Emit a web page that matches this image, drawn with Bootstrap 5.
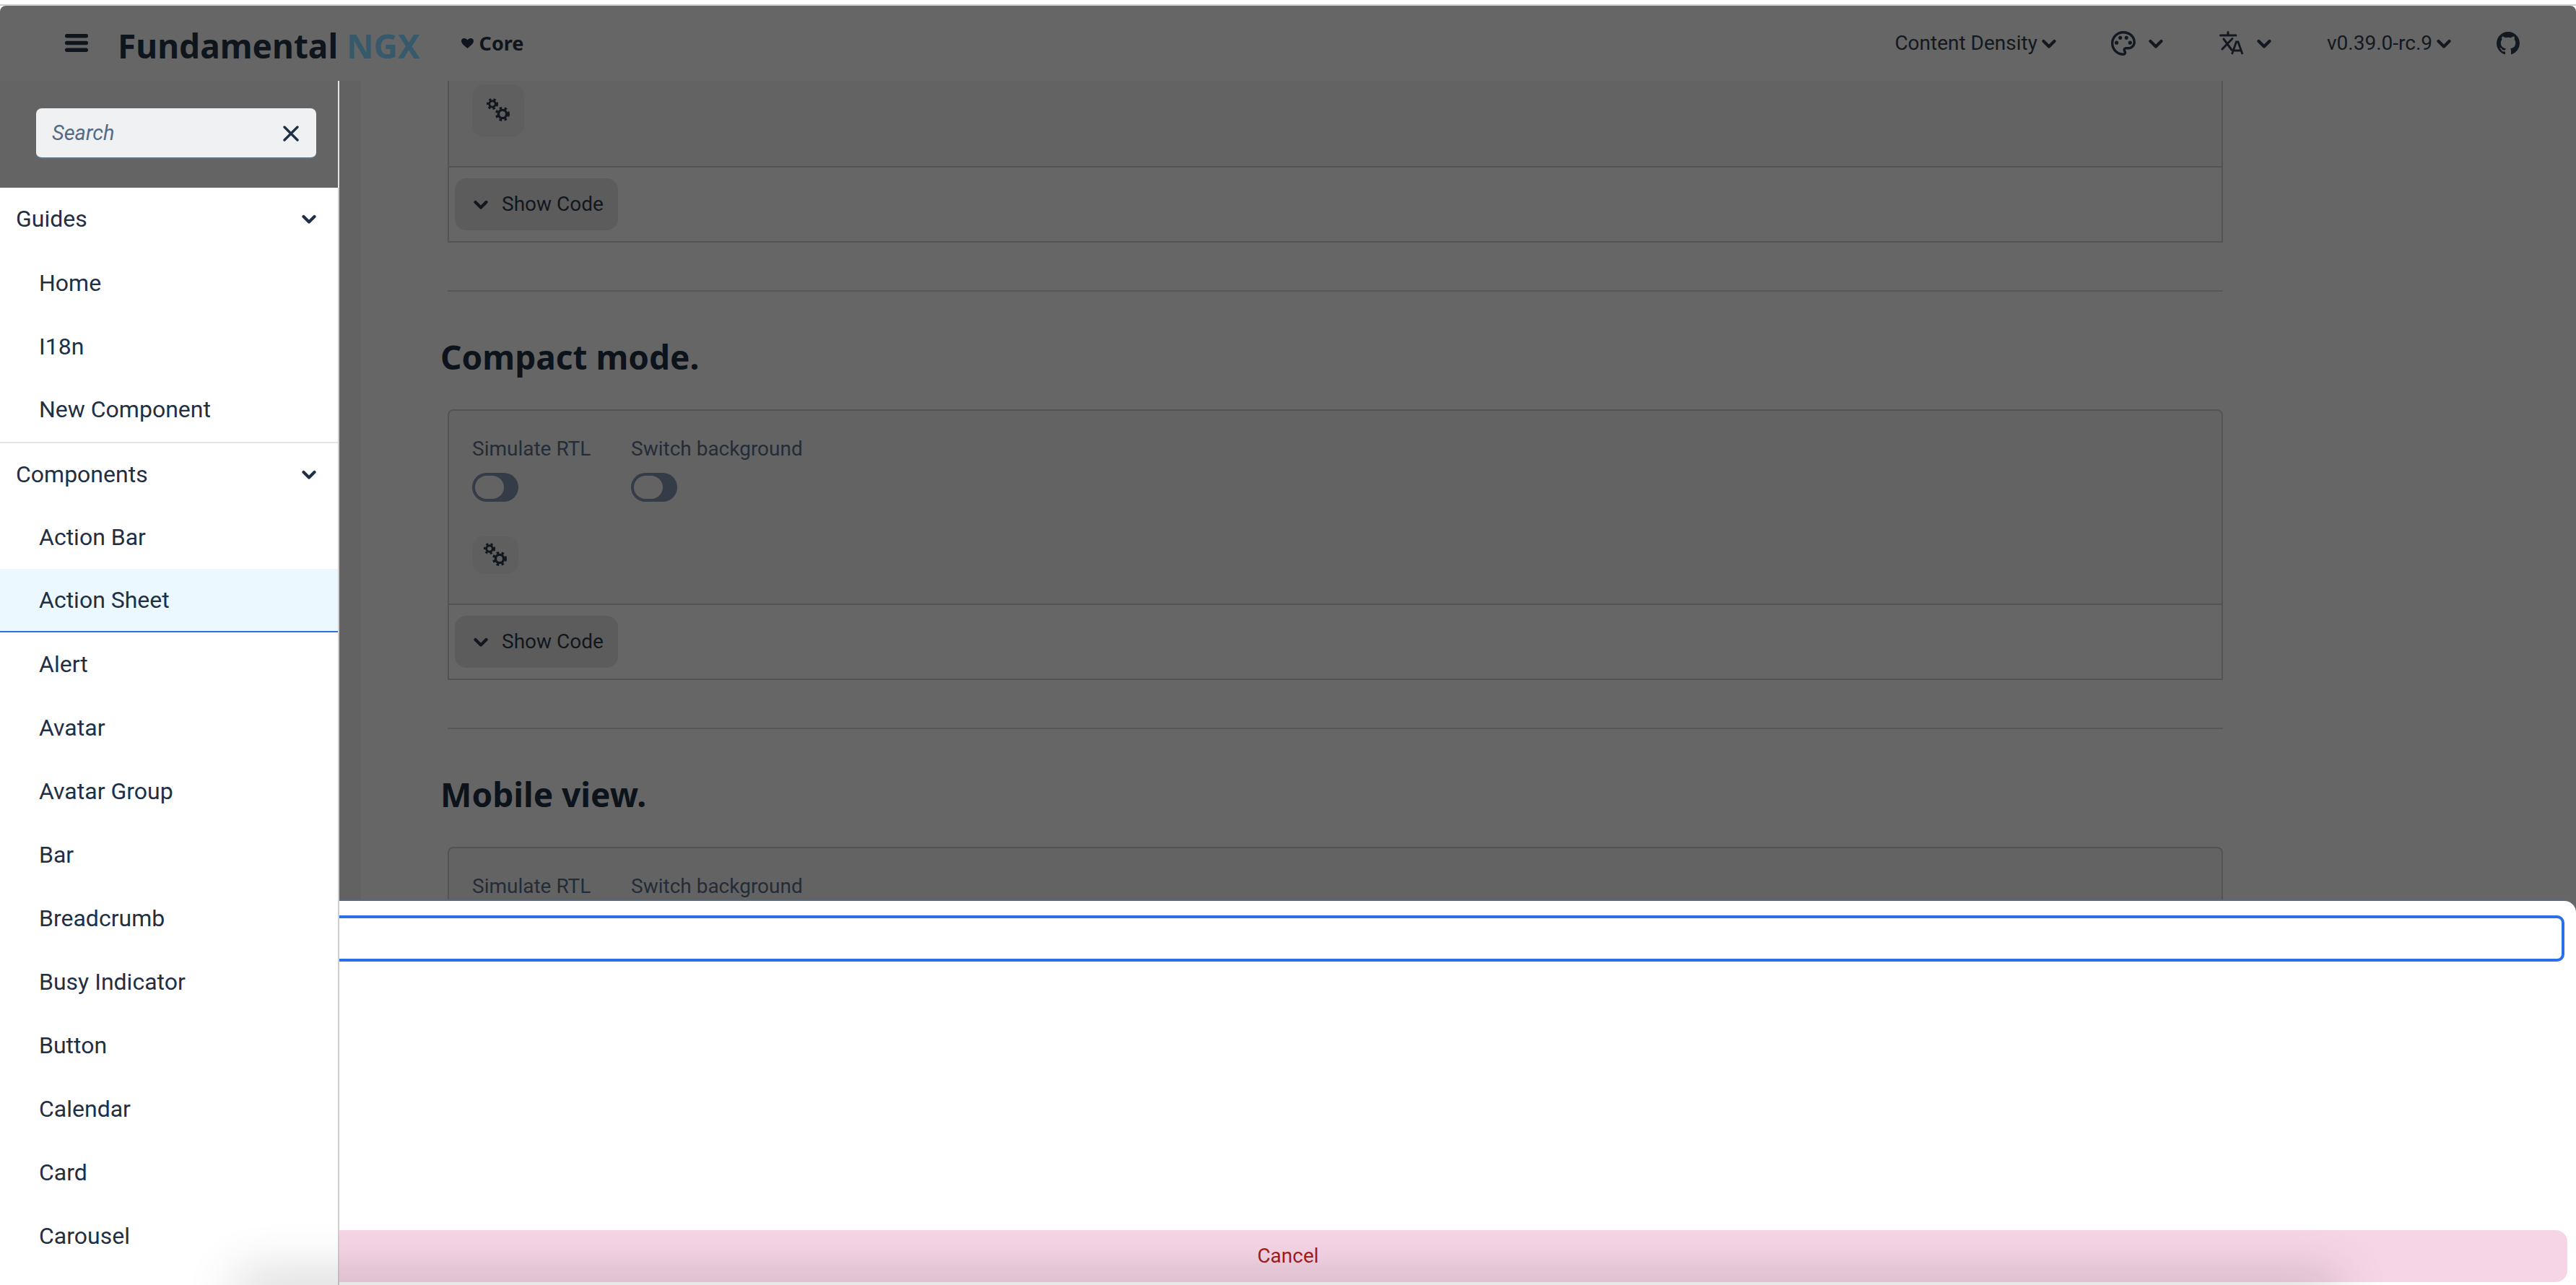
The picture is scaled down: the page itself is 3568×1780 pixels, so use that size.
<!DOCTYPE html>
<html lang="en">
<head>
<meta charset="utf-8">
<title>Fundamental NGX</title>
<link rel="stylesheet" href="https://cdn.jsdelivr.net/npm/bootstrap@5.3.0/dist/css/bootstrap.min.css">
<style>
html,body{height:100%}
body{font-family:Roboto,"Liberation Sans",sans-serif;font-size:32px;background:#fff;color:#1f3044;overflow:hidden}
.top-strip{height:8px;flex:none;background:#fff;border-bottom:2px solid #cfcfcf}
.site-head{height:104px;flex:none;background:#666;border-radius:8px 8px 0 0;color:#0e151d;padding:0 78px 0 90px;align-items:center;display:flex}
.burger{width:32px;height:25px;flex:none;position:relative;top:-1px}
.brand-txt{font-family:"Noto Sans",Roboto,sans-serif;font-size:46px;font-weight:700;margin-left:41px;line-height:1;white-space:nowrap;color:#0e151d;position:relative;top:3px}
.brand-txt span{color:#36596b}
.core-link{font-family:"Noto Sans",Roboto,sans-serif;margin-left:57px;font-size:27px;font-weight:700;display:flex;align-items:center;gap:8px;position:relative}
.hd-item{display:flex;align-items:center;font-size:28px;white-space:nowrap;color:#121920}
.chev{width:20px;height:13px;flex:none;fill:none;stroke:currentColor;stroke-width:4.2;stroke-linecap:round;stroke-linejoin:round}
.ic32{width:34px;height:34px;flex:none}
.gap-s{gap:18px}.gap-t{gap:6px}
.ml-a{margin-left:76px}.ml-b{margin-left:78px}.ml-c{margin-left:77px}.ml-d{margin-left:63px}
.side{width:470px;flex:none;position:relative;z-index:3;display:flex;flex-direction:column}
.side-search{height:148px;flex:none;background:#646464;border-right:2px solid #e4e4e4;padding:38px 30px 0 50px}
.search-box{height:70px;background:#eff1f2;border-bottom:2px solid #5b738b;border-radius:8px;padding:2px 24px 0 22px;display:flex;align-items:center;justify-content:space-between;font-size:29px;font-style:italic;color:#556b82}
.side-nav{flex:1;background:#fff;border-right:2px solid #cfcfcf;overflow:hidden}
.sec-row{height:86px;display:flex;align-items:center;justify-content:space-between;padding:0 30px 0 22px;color:#1f3044}
.sec-row.first{margin-bottom:2px}
.nav-row{height:88px;display:flex;align-items:center;padding-left:54px;color:#1f3044;white-space:nowrap}
.nav-row.sel{background:#ebf8ff;border-bottom:2px solid #2b70e8}
.sec-end{height:90px;padding-bottom:2px;border-bottom:2px solid #e3e3e3}
.page-main{flex:1;min-width:0;background:#666;border-left:30px solid #626262;padding-left:120px;overflow:hidden}
.page-inner{margin-top:-151px;width:2459px}
.demo-card{--bs-card-bg:#636363;--bs-card-border-color:#535353;--bs-card-border-width:2px;--bs-card-border-radius:8px;--bs-card-inner-border-radius:6px;height:375px;border-bottom-left-radius:0;border-bottom-right-radius:0}
.demo-body{padding:32px 32px 0;height:267px;flex:none}
.demo-body.scrolled{padding-top:154px}
.opt-col{width:220px;color:#232c37;font-size:28px;line-height:42px;white-space:nowrap}
.tog{display:flex;align-items:center;width:64px;height:40px;margin-top:12px;background:#343c48;border-radius:20px;padding-left:4px}
.tog i{display:block;width:40px;height:32px;background:#636363;border-radius:16px}
.gear-btn{display:flex;align-items:center;justify-content:center;background:#5f5f5f;border-radius:16px}
.gear-a{width:72px;height:72px}
.gear-b{width:64px;height:52px;margin-top:48px}
.gears{width:32px;height:36px}
.demo-foot{height:104px;flex:none;padding:15px 8px;border-top:2px solid #535353;background:#666}
.code-btn{display:inline-flex;align-items:center;gap:19px;height:72px;width:226px;padding-left:26px;background:#5c5c5c;border-radius:16px;font-size:28px;color:#10171f}
.sep{margin:66px 0 61px;border:0;border-top:2px solid #575757;opacity:1}
.sec-title{font-family:"Noto Sans",Roboto,sans-serif;font-size:46px;font-weight:700;line-height:58px;margin:0 0 44px -10px;color:#0c131b}
.sheet{position:absolute;left:0;right:0;bottom:0;height:532px;z-index:2;background:#fff;border-radius:0 16px 0 0;box-shadow:0 -2px 0 #5d6a78;padding:20px 12px 4px;display:flex;flex-direction:column}
.focus-box{height:64px;margin-right:4px;border:4px solid #2b70e8;border-radius:10px;flex:none}
.cancel-btn{margin-top:auto;height:72px;background:#f6d5e7;border-radius:16px;display:flex;align-items:center;justify-content:center;font-size:28px;color:#a5201a;flex:none}
.bottom-glow{position:absolute;left:340px;right:340px;bottom:-20px;height:20px;z-index:4;box-shadow:0 0 70px 14px rgba(0,0,0,.19)}
</style>
</head>
<body class="d-flex flex-column position-relative">
<div class="top-strip"></div>
<header class="site-head">
  <svg class="burger" viewBox="0 0 32 25"><g fill="#0e151d"><rect x="0" y="0" width="32" height="5.4" rx="2.7"/><rect x="0" y="9.8" width="32" height="5.4" rx="2.7"/><rect x="0" y="19.6" width="32" height="5.4" rx="2.7"/></g></svg>
  <div class="brand-txt">Fundamental <span>NGX</span></div>
  <div class="core-link"><svg width="17" height="14" viewBox="0 0 17 14"><path fill="#0e151d" d="M8.5 14C6 11.5 0 8 0 3.8 0 1.5 1.8 0 3.8 0 5.8 0 7.5 1 8.5 2.5 9.5 1 11.200 0 13.200 0 15.200 0 17 1.500 17 3.800 17 8 11 11.500 8.500 14z"/></svg>Core</div>
  <div class="hd-item gap-t ms-auto">Content Density<svg class="chev" viewBox="0 0 20 13"><path d="M2.500 3 10 10.500 17.500 3"/></svg></div>
  <div class="hd-item gap-s ml-a">
    <svg class="ic32" viewBox="2 2 20 20"><path fill="#121920" d="M12 22C6.490 22 2 17.510 2 12S6.490 2 12 2s10 4.040 10 9c0 3.310-2.690 6-6 6h-1.770c-.28 0-.5.22-.5.5 0 .12.05.23.13.33.41.47.64 1.060.64 1.670A2.500 2.500 0 0 1 12 22zm0-18c-4.410 0-8 3.590-8 8s3.590 8 8 8c.28 0 .5-.22.5-.5a.54.54 0 0 0-.14-.35c-.41-.46-.63-1.050-.63-1.650a2.500 2.500 0 0 1 2.500-2.500H16c2.210 0 4-1.790 4-4 0-3.860-3.590-7-8-7z"/><circle cx="6.500" cy="11.500" r="1.500" fill="#121920"/><circle cx="9.500" cy="7.500" r="1.500" fill="#121920"/><circle cx="14.500" cy="7.500" r="1.500" fill="#121920"/><circle cx="17.500" cy="11.500" r="1.500" fill="#121920"/></svg>
    <svg class="chev" viewBox="0 0 20 13"><path d="M2.500 3 10 10.500 17.500 3"/></svg>
  </div>
  <div class="hd-item gap-s ml-b">
    <svg class="ic32" viewBox="0 0 34 34" fill="none" stroke="#121920" stroke-width="3" stroke-linecap="round"><path d="M1.500 6H23M12 1.500V6M6 11 17 26M18 10.500 4 25"/><path stroke-width="2.800" stroke-linecap="butt" d="M17.500 32 23.500 15h2.500l6 17M20 27h9.500"/></svg>
    <svg class="chev" viewBox="0 0 20 13"><path d="M2.500 3 10 10.500 17.500 3"/></svg>
  </div>
  <div class="hd-item gap-t ml-c">v0.39.0-rc.9<svg class="chev" viewBox="0 0 20 13"><path d="M2.500 3 10 10.500 17.500 3"/></svg></div>
  <div class="hd-item ml-d"><svg width="32" height="32" viewBox="0 0 16 16"><path fill="#121920" d="M8 0C3.580 0 0 3.580 0 8c0 3.540 2.290 6.530 5.470 7.590.4.07.55-.17.55-.38 0-.19-.01-.82-.01-1.490-2.010.37-2.530-.49-2.690-.94-.09-.23-.48-.94-.82-1.130-.28-.15-.68-.52-.01-.53.63-.01 1.080.58 1.230.82.72 1.210 1.870.87 2.330.66.07-.52.28-.87.51-1.070-1.780-.2-3.640-.89-3.640-3.950 0-.87.31-1.590.82-2.150-.08-.2-.36-1.020.08-2.120 0 0 .67-.21 2.200.82.64-.18 1.320-.27 2-.27.68 0 1.360.09 2 .27 1.530-1.040 2.200-.82 2.200-.82.44 1.100.16 1.920.08 2.120.51.56.82 1.270.82 2.150 0 3.070-1.870 3.750-3.650 3.950.29.25.54.73.54 1.480 0 1.070-.01 1.930-.01 2.200 0 .21.15.46.55.38A8.012 8.012 0 0 0 16 8c0-4.420-3.580-8-8-8z"/></svg></div>
</header>
<div class="d-flex flex-grow-1" style="min-height:0">
  <aside class="side">
    <div class="side-search"><div class="search-box"><span>Search</span><svg width="22" height="22" viewBox="0 0 22 22"><path d="M2 2 20 20M20 2 2 20" stroke="#1f3044" stroke-width="3.400" stroke-linecap="round"/></svg></div></div>
    <nav class="side-nav">
      <div class="sec-row first">Guides<svg class="chev" viewBox="0 0 20 13"><path d="M2.500 3 10 10.500 17.500 3"/></svg></div>
      <div class="nav-row">Home</div>
      <div class="nav-row">I18n</div>
      <div class="nav-row sec-end">New Component</div>
      <div class="sec-row">Components<svg class="chev" viewBox="0 0 20 13"><path d="M2.500 3 10 10.500 17.500 3"/></svg></div>
      <div class="nav-row">Action Bar</div>
      <div class="nav-row sel">Action Sheet</div>
      <div class="nav-row">Alert</div>
      <div class="nav-row">Avatar</div>
      <div class="nav-row">Avatar Group</div>
      <div class="nav-row">Bar</div>
      <div class="nav-row">Breadcrumb</div>
      <div class="nav-row">Busy Indicator</div>
      <div class="nav-row">Button</div>
      <div class="nav-row">Calendar</div>
      <div class="nav-row">Card</div>
      <div class="nav-row">Carousel</div>
    </nav>
  </aside>
  <main class="page-main">
    <div class="page-inner">
      <div class="card demo-card">
        <div class="demo-body scrolled">
          <div class="gear-btn gear-a"><svg class="gears" viewBox="0 0 32 36" fill="none" stroke="#10171f"><circle cx="8" cy="9" r="4.300" stroke-width="3"/><circle cx="8" cy="9" r="6.600" stroke-width="3" stroke-dasharray="3.200 3.300"/><circle cx="22" cy="23" r="5.600" stroke-width="3.400"/><circle cx="22" cy="23" r="8.400" stroke-width="3.200" stroke-dasharray="3.500 3.500"/></svg></div>
        </div>
        <div class="demo-foot"><div class="code-btn"><svg class="chev" viewBox="0 0 20 13"><path d="M2.500 3 10 10.500 17.500 3"/></svg>Show Code</div></div>
      </div>
      <hr class="sep">
      <h2 class="sec-title">Compact mode.</h2>
      <div class="card demo-card">
        <div class="demo-body">
          <div class="d-flex"><div class="opt-col">Simulate RTL<div class="tog"><i></i></div></div><div class="opt-col">Switch background<div class="tog"><i></i></div></div></div>
          <div class="gear-btn gear-b"><svg class="gears" viewBox="0 0 32 36" fill="none" stroke="#10171f"><circle cx="8" cy="9" r="4.300" stroke-width="3"/><circle cx="8" cy="9" r="6.600" stroke-width="3" stroke-dasharray="3.200 3.300"/><circle cx="22" cy="23" r="5.600" stroke-width="3.400"/><circle cx="22" cy="23" r="8.400" stroke-width="3.200" stroke-dasharray="3.500 3.500"/></svg></div>
        </div>
        <div class="demo-foot"><div class="code-btn"><svg class="chev" viewBox="0 0 20 13"><path d="M2.500 3 10 10.500 17.500 3"/></svg>Show Code</div></div>
      </div>
      <hr class="sep">
      <h2 class="sec-title">Mobile view.</h2>
      <div class="card demo-card">
        <div class="demo-body">
          <div class="d-flex"><div class="opt-col">Simulate RTL</div><div class="opt-col">Switch background</div></div>
        </div>
      </div>
    </div>
  </main>
</div>
<div class="sheet">
  <div class="focus-box"></div>
  <div class="cancel-btn">Cancel</div>
</div>
<div class="bottom-glow"></div>
<script src="https://cdn.jsdelivr.net/npm/bootstrap@5.3.0/dist/js/bootstrap.bundle.min.js"></script>
</body>
</html>
